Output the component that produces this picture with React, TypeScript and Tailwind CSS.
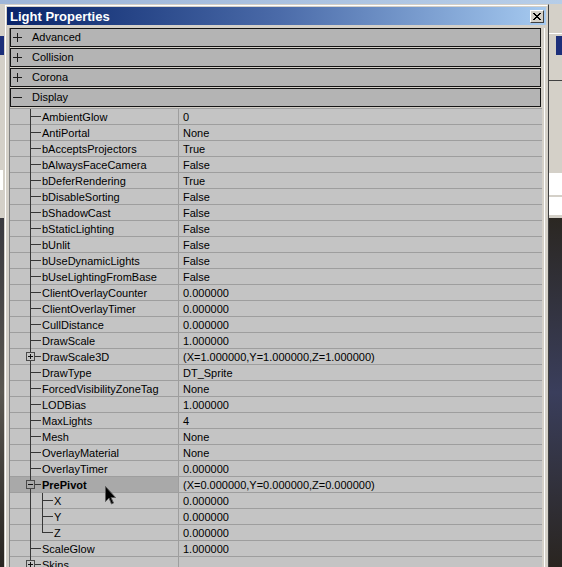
import React from 'react';

type Row = {
  name: string;
  value: string;
  kind?: 'leaf' | 'plus' | 'minus';
  child?: boolean;
  lastChild?: boolean;
  bold?: boolean;
  selected?: boolean;
};

const ROWS: Row[] = [
  { name: 'AmbientGlow', value: '0' },
  { name: 'AntiPortal', value: 'None' },
  { name: 'bAcceptsProjectors', value: 'True' },
  { name: 'bAlwaysFaceCamera', value: 'False' },
  { name: 'bDeferRendering', value: 'True' },
  { name: 'bDisableSorting', value: 'False' },
  { name: 'bShadowCast', value: 'False' },
  { name: 'bStaticLighting', value: 'False' },
  { name: 'bUnlit', value: 'False' },
  { name: 'bUseDynamicLights', value: 'False' },
  { name: 'bUseLightingFromBase', value: 'False' },
  { name: 'ClientOverlayCounter', value: '0.000000' },
  { name: 'ClientOverlayTimer', value: '0.000000' },
  { name: 'CullDistance', value: '0.000000' },
  { name: 'DrawScale', value: '1.000000' },
  { name: 'DrawScale3D', value: '(X=1.000000,Y=1.000000,Z=1.000000)', kind: 'plus' },
  { name: 'DrawType', value: 'DT_Sprite' },
  { name: 'ForcedVisibilityZoneTag', value: 'None' },
  { name: 'LODBias', value: '1.000000' },
  { name: 'MaxLights', value: '4' },
  { name: 'Mesh', value: 'None' },
  { name: 'OverlayMaterial', value: 'None' },
  { name: 'OverlayTimer', value: '0.000000' },
  { name: 'PrePivot', value: '(X=0.000000,Y=0.000000,Z=0.000000)', kind: 'minus', bold: true, selected: true },
  { name: 'X', value: '0.000000', child: true },
  { name: 'Y', value: '0.000000', child: true },
  { name: 'Z', value: '0.000000', child: true, lastChild: true },
  { name: 'ScaleGlow', value: '1.000000' },
  { name: 'Skins', value: '', kind: 'plus' },
];

const CATEGORIES = [
  { name: 'Advanced', open: false },
  { name: 'Collision', open: false },
  { name: 'Corona', open: false },
  { name: 'Display', open: true },
];

const LINE = '#363636';

function TreeLines({ row }: { row: Row }) {
  const kind = row.kind ?? 'leaf';
  const width = row.child ? 44 : 32;
  return (
    <svg width={width} height={15} className="shrink-0 overflow-visible" shapeRendering="crispEdges">
      {kind === 'leaf' && <line x1={20.5} y1={0} x2={20.5} y2={16} stroke={LINE} />}
      {kind === 'leaf' && !row.child && <line x1={21} y1={7.5} x2={31} y2={7.5} stroke={LINE} />}
      {kind !== 'leaf' && (
        <g>
          <line x1={20.5} y1={0} x2={20.5} y2={3} stroke={LINE} />
          <line x1={20.5} y1={12} x2={20.5} y2={16} stroke={LINE} />
          <rect x={16.5} y={3.5} width={8} height={8} fill="none" stroke="#4a4a4a" />
          <line x1={18} y1={7.5} x2={23} y2={7.5} stroke="#101010" />
          {kind === 'plus' && <line x1={20.5} y1={5} x2={20.5} y2={10} stroke="#101010" />}
          <line x1={25} y1={7.5} x2={31} y2={7.5} stroke={LINE} />
        </g>
      )}
      {row.child && (
        <g>
          <line x1={32.5} y1={0} x2={32.5} y2={row.lastChild ? 8 : 16} stroke={LINE} />
          <line x1={33} y1={7.5} x2={43} y2={7.5} stroke={LINE} />
        </g>
      )}
    </svg>
  );
}

function Sign({ plus }: { plus: boolean }) {
  return (
    <svg width={9} height={9} className="shrink-0" shapeRendering="crispEdges">
      <line x1={0} y1={4.5} x2={9} y2={4.5} stroke="#1c1c1c" />
      {plus && <line x1={4.5} y1={0} x2={4.5} y2={9} stroke="#1c1c1c" />}
    </svg>
  );
}

function Cursor() {
  return (
    <svg width={12} height={19} viewBox="0 0 12 19" className="absolute left-[105px] top-[486px]">
      <path d="M0.5 0.5 L0.5 15.5 L4 12 L6.5 18 L8.5 17 L6 11.5 L10.5 11.5 Z" fill="#000" stroke="#5a5a5a" strokeWidth={1} />
    </svg>
  );
}

export default function App() {
  return (
    <div className="relative w-[562px] h-[567px] overflow-hidden bg-[#d4d0c8] font-['Liberation_Sans',Arial,sans-serif]">
      {/* desktop behind the window */}
      <div className="absolute left-0 top-0 w-full h-[4px] bg-gradient-to-r from-[#9fb6d8] to-[#b6cde8]" />
      <div className="absolute left-0 top-[36px] w-[4px] h-[19px] bg-[#1c2f7a]" />
      <div className="absolute left-[556px] top-[36px] w-[6px] h-[19px] bg-[#1c2f7a]" />
      <div className="absolute left-[549px] top-[33px] w-[13px] h-px bg-white" />
      <div className="absolute left-[549px] top-[80px] w-[13px] h-px bg-[#404040]" />
      <div className="absolute left-[549px] top-[173px] w-[13px] h-[22px] bg-white" />
      <div className="absolute left-[549px] top-[197px] w-[13px] h-[18px] bg-white" />
      <div className="absolute left-0 top-[170px] w-[3px] h-[20px] bg-white" />
      <div className="absolute left-0 top-[218px] w-[4px] h-[349px] bg-gradient-to-b from-[#3a3a40] via-[#5a5750] to-[#2a2622]" />
      <div className="absolute left-[549px] top-[218px] w-[13px] h-[349px] bg-gradient-to-b from-[#2b2722] via-[#3a3e5c] to-[#2a2520]" />

      {/* window */}
      <div className="absolute left-[4px] top-[4px] w-[545px] h-[620px] border border-t-[#d4d0c8] border-l-[#d4d0c8] border-r-[#404040] border-b-[#404040]">
        <div className="h-full border border-t-white border-l-white border-r-[#d4d0c8] border-b-[#808080] p-px bg-[#d4d0c8] flex flex-col">
          {/* title bar */}
          <div className="h-[18px] shrink-0 flex items-center justify-between pl-[3px] pr-[2px] bg-gradient-to-r from-[#0a246a] via-[#4a6aa8] to-[#a6caf0]">
            <span className="text-white font-bold text-[13px] leading-none">Light Properties</span>
            <div className="w-[14px] h-[13px] bg-[#d4d0c8] border border-t-white border-l-white border-r-[#404040] border-b-[#404040] flex items-center justify-center">
              <svg width={8} height={7} viewBox="0 0 8 7" shapeRendering="crispEdges">
                <path d="M0 0h2v1h1v1h2V1h1V0h2v1H7v1H6v1H5v1h1v1h1v1h1v1H6V6H5V5H3v1H2v1H0V6h1V5h1V4h1V3H2V2H1V1H0z" fill="#000" />
              </svg>
            </div>
          </div>

          {/* property panel */}
          <div className="mt-[3px] ml-[2px] w-[536px] shrink-0 border-l border-l-[#808080] border-r border-r-white bg-[#d4d0c8] text-[11px] text-black">
            <div className="flex flex-col gap-px">
              {CATEGORIES.map((c) => (
                <div
                  key={c.name}
                  className="w-[531px] h-[19px] flex items-center border border-[#141414] bg-[#b4b4b4] pl-[2px]"
                >
                  <Sign plus={!c.open} />
                  <span className="ml-[10px] leading-none">{c.name}</span>
                </div>
              ))}
            </div>

            <div className="mt-px w-[532px] border-t border-[#9e9e9e]">
              {ROWS.map((r) => (
                <div key={r.name} className="h-[16px] flex border-b border-[#9e9e9e] bg-[#c4c4c4]">
                  <div
                    className={`w-[168px] shrink-0 flex items-center ${r.selected ? 'bg-[#a9a9a9]' : ''} ${r.bold ? 'font-bold' : ''}`}
                  >
                    <TreeLines row={r} />
                    <span className="leading-none whitespace-nowrap pt-px">{r.name}</span>
                  </div>
                  <div className="w-px bg-[#9e9e9e]" />
                  <div className="flex-1 flex items-center pl-[4px]">
                    <span className="leading-none whitespace-nowrap pt-px">{r.value}</span>
                  </div>
                </div>
              ))}
            </div>
          </div>
        </div>
      </div>

      <Cursor />
    </div>
  );
}
